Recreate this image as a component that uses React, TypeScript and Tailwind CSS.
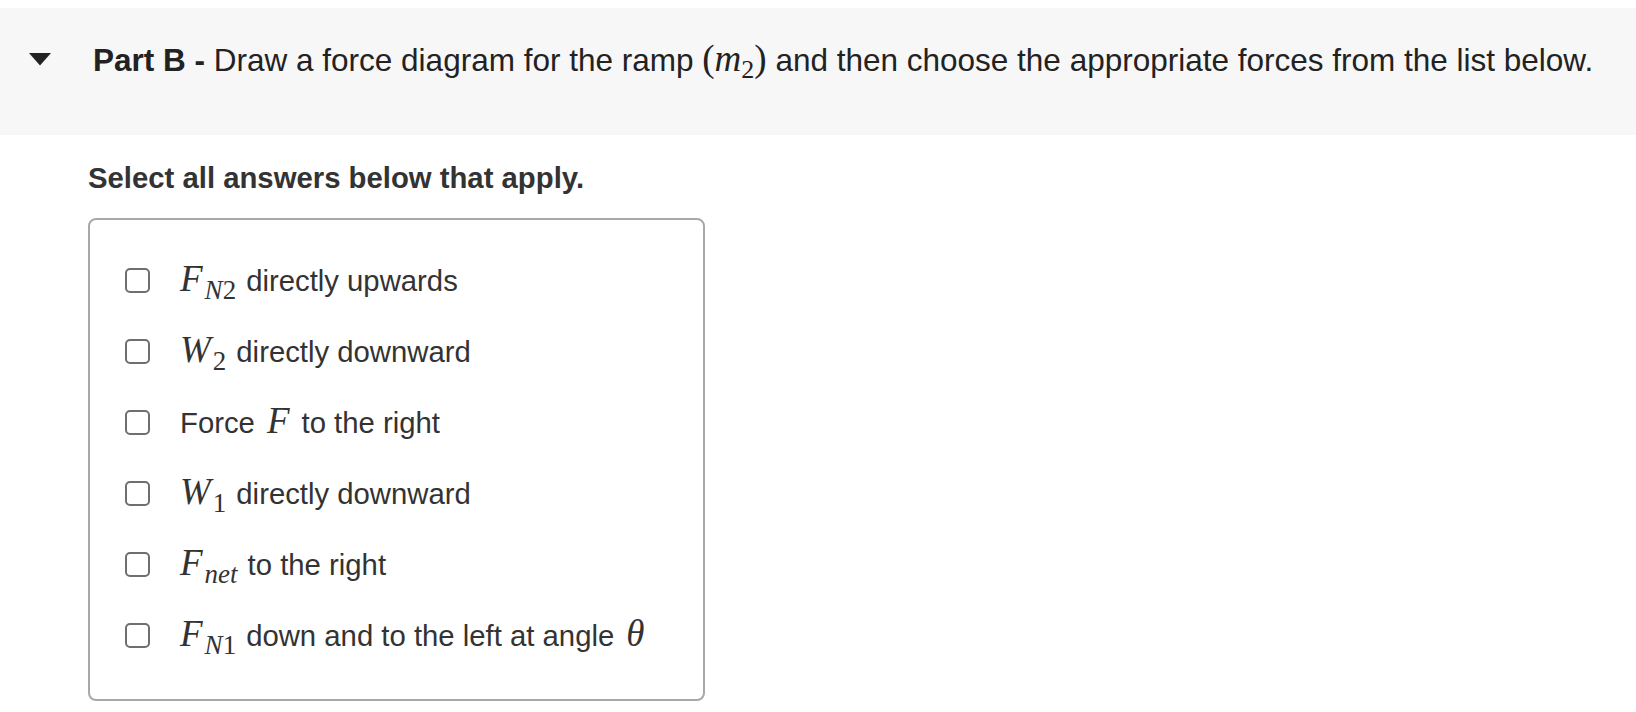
import { FC } from "react";

const options = [
  { key: "fn2", sym: "F", subItalic: "N", subUpright: "2", text: "directly upwards" },
  { key: "w2", sym: "W", subUpright: "2", text: "directly downward" },
  { key: "f", prefix: "Force", sym: "F", text: "to the right" },
  { key: "w1", sym: "W", subUpright: "1", text: "directly downward" },
  { key: "fnet", sym: "F", subItalic: "net", text: "to the right" },
  { key: "fn1", sym: "F", subItalic: "N", subUpright: "1", text: "down and to the left at angle", theta: true },
];

const MathSym: FC<{ sym: string; subItalic?: string; subUpright?: string }> = ({ sym, subItalic, subUpright }) => (
  <span className="font-['Liberation_Serif',serif] text-[37px] leading-none whitespace-nowrap">
    <span className="italic pr-[2px]">{sym}</span>
    {(subItalic || subUpright) && (
      <span className="relative top-[8px] text-[27px]">
        {subItalic && <span className="italic">{subItalic}</span>}
        {subUpright && <span>{subUpright}</span>}
      </span>
    )}
  </span>
);

const App: FC = () => {
  return (
    <div className="w-[1636px] h-[712px] bg-white pt-[8px] font-['Liberation_Sans',Arial,sans-serif] text-[#2d2d2d]">
      <div className="h-[127px] bg-[#f7f7f7] flex items-start pt-[32px]">
        <svg width="22" height="13" viewBox="0 0 22 13" className="ml-[29px] mt-[13px] shrink-0">
          <polygon points="0,0 22,0 11,12.5" fill="#222" />
        </svg>
        <h2 className="ml-[42px] text-[31.5px] leading-[38px] text-[#222] whitespace-nowrap">
          <span className="font-bold">Part B - </span>
          Draw a force diagram for the ramp{" "}
          <span className="font-['Liberation_Serif',serif] text-[37px]">
            (<span className="italic">m</span>
            <span className="relative top-[7px] text-[26px]">2</span>)
          </span>{" "}
          and then choose the appropriate forces from the list below.
        </h2>
      </div>

      <div className="pl-[88px]">
        <p className="mt-[26px] text-[29.3px] leading-[33px] font-bold text-[#333]">Select all answers below that apply.</p>
        <div className="mt-[24px] w-[617px] h-[483px] border-2 border-[#a8a8a8] rounded-[8px] pl-[35px] py-[25px]">
          {options.map((o) => (
            <label key={o.key} className="flex items-center h-[71px] text-[29.3px] text-[#333]">
              <span className="w-[25px] h-[25px] border-2 border-[#6f6f6f] rounded-[5px] shrink-0 bg-white" />
              <span className="ml-[30px] flex items-baseline whitespace-nowrap">
                {o.prefix && <span className="mr-[12px]">{o.prefix}</span>}
                <MathSym sym={o.sym} subItalic={o.subItalic} subUpright={o.subUpright} />
                <span className="ml-[10px]">{o.text}</span>
                {o.theta && (
                  <span className="ml-[12px] font-['Liberation_Serif',serif] italic text-[37px] leading-none">θ</span>
                )}
              </span>
            </label>
          ))}
        </div>
      </div>
    </div>
  );
};

export default App;
